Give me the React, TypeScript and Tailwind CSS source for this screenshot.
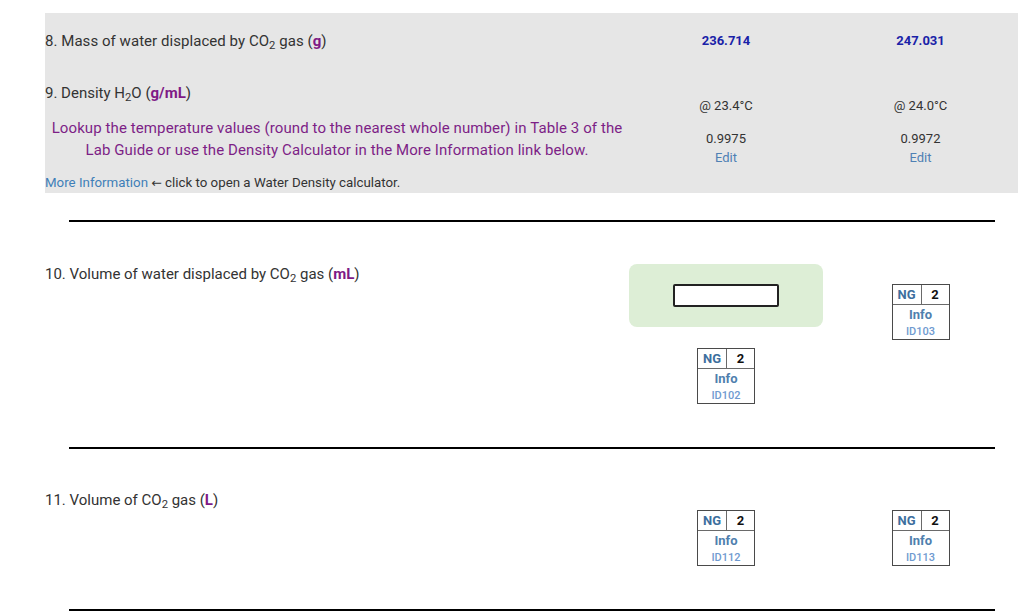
import React from 'react';

const unit = 'font-bold text-[#7f1a86]';

const NgBox: React.FC<{ id: string }> = ({ id }) => (
  <div className="w-[58px] border-[1.5px] border-[#4a4a4a] bg-white text-center leading-none">
    <div className="flex h-[20px] border-b border-[#6a6a6a]">
      <div className="flex w-[29px] items-center justify-center border-r border-[#6a6a6a] text-[13px] font-bold text-[#3d6f9e]">NG</div>
      <div className="flex flex-1 items-center justify-center text-[13px] font-bold text-[#111]">2</div>
    </div>
    <div className="pt-[3px] text-[13px] leading-[13px] font-bold text-[#4f7fae]">Info</div>
    <div className="pt-[5px] pb-[2px] text-[11px] leading-[11px] font-medium text-[#6f9ad0]">{id}</div>
  </div>
);

const Rule = () => <div className="ml-[69px] w-[926px] h-[2px] bg-black" />;

export default function App() {
  return (
    <div className="min-h-screen w-[1024px] bg-white pt-[13px] text-[#333] font-['Roboto','Liberation_Sans',sans-serif]">
      {/* gray block: rows 8 and 9 */}
      <div className="ml-[45px] w-[973px] bg-[#e6e6e6]">
        <div className="grid h-[56px] grid-cols-[584px_194px_195px] items-center">
          <div className="text-[15px] leading-[20px] tracking-[0.05px]">
            8. Mass of water displaced by CO<sub>2</sub> gas (<span className={unit}>g</span>)
          </div>
          <div className="text-center text-[13px] font-bold text-[#1a22a8]">236.714</div>
          <div className="text-center text-[13px] font-bold text-[#1a22a8]">247.031</div>
        </div>
        <div className="grid grid-cols-[584px_194px_195px]">
          <div>
            <div className="pt-[14px] text-[15px] leading-[20px]">
              9. Density H<sub>2</sub>O (<span className={unit}>g/mL</span>)
            </div>
            <p className="mt-[14px] text-center text-[15px] leading-[22px] tracking-[0.1px] text-[#7d1f86]">
              Lookup the temperature values (round to the nearest whole number) in Table 3 of the
              <br />
              Lab Guide or use the Density Calculator in the More Information link below.
            </p>
            <div className="mt-[13px] pb-[1px] text-[13.3px] leading-[18px]">
              <span className="text-[#3f7fb8]">More Information</span>{' '}
              <span className="font-['DejaVu_Sans',sans-serif] text-[12.5px]">←</span> click to open a Water Density calculator.
            </div>
          </div>
          {[['23.4', '0.9975'], ['24.0', '0.9972']].map(([t, d]) => (
            <div key={t} className="pt-[28px] text-center text-[13px] leading-[18px]">
              <div>@ {t}°C</div>
              <div className="mt-[15px]">{d}</div>
              <div className="mt-[1px] text-[#4f80b4]">Edit</div>
            </div>
          ))}
        </div>
      </div>

      <div className="mt-[27px]">
        <Rule />
      </div>

      {/* row 10 */}
      <div className="ml-[45px] mt-[42px] grid grid-cols-[584px_194px_195px]">
        <div className="text-[15px] leading-[20px]">
          10. Volume of water displaced by CO<sub>2</sub> gas (<span className={unit}>mL</span>)
        </div>
        <div className="flex flex-col items-center">
          <div className="flex h-[63px] w-[194px] items-center justify-center rounded-lg bg-[#ddeed6]">
            <div className="h-[23px] w-[106px] rounded-[2px] border-2 border-[#222] bg-white" />
          </div>
          <div className="mt-[21px]">
            <NgBox id="ID102" />
          </div>
        </div>
        <div className="flex justify-center pt-[20px]">
          <div>
            <NgBox id="ID103" />
          </div>
        </div>
      </div>

      <div className="mt-[43px]">
        <Rule />
      </div>

      {/* row 11 */}
      <div className="ml-[45px] mt-[41px] grid grid-cols-[584px_194px_195px]">
        <div className="text-[15px] leading-[20px]">
          11. Volume of CO<sub>2</sub> gas (<span className={unit}>L</span>)
        </div>
        <div className="flex justify-center pt-[20px]">
          <div>
            <NgBox id="ID112" />
          </div>
        </div>
        <div className="flex justify-center pt-[20px]">
          <div>
            <NgBox id="ID113" />
          </div>
        </div>
      </div>

      <div className="mt-[43px]">
        <Rule />
      </div>
    </div>
  );
}
